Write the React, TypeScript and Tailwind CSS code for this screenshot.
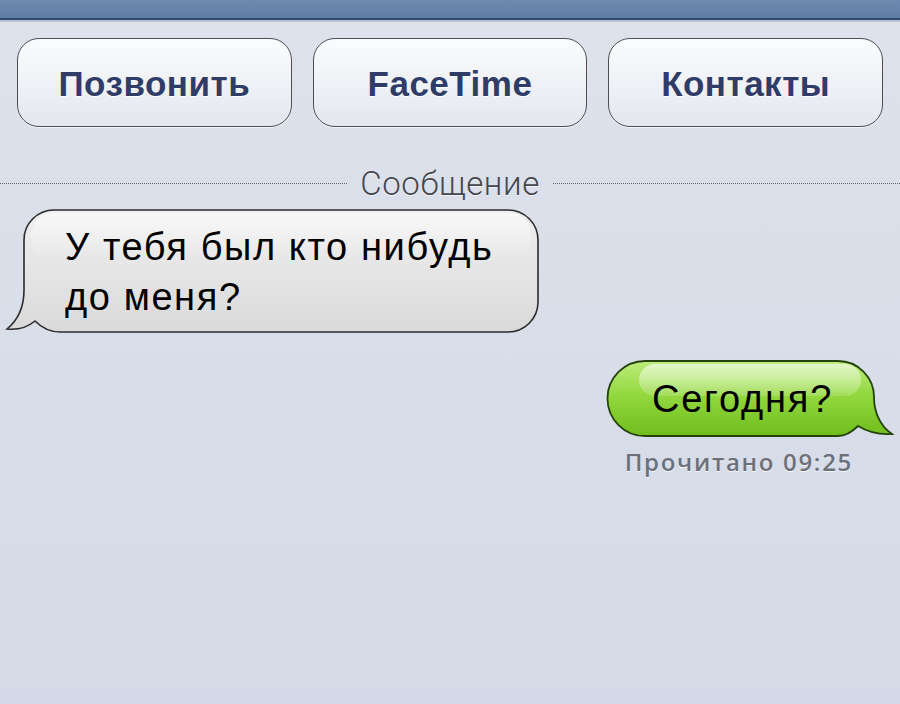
import React from 'react';

const buttons = ['Позвонить', 'FaceTime', 'Контакты'];

const GrayBubble: React.FC<{ lines: string[] }> = ({ lines }) => (
  <div className="relative w-[536px] h-[126px] ml-[5px]">
    <svg className="absolute inset-0" width="536" height="126" viewBox="0 0 536 126">
      <defs>
        <linearGradient id="grayFill" x1="0" y1="0" x2="0" y2="1">
          <stop offset="0" stopColor="#efefef" />
          <stop offset="0.5" stopColor="#e5e5e5" />
          <stop offset="1" stopColor="#d9d9d9" />
        </linearGradient>
        <linearGradient id="grayGloss" x1="0" y1="0" x2="0" y2="1">
          <stop offset="0" stopColor="#ffffff" stopOpacity="0.55" />
          <stop offset="1" stopColor="#ffffff" stopOpacity="0" />
        </linearGradient>
      </defs>
      <path
        d="M 49 2 H 503 A 30 30 0 0 1 533 32 V 94 A 30 30 0 0 1 503 124 H 55 C 43 124 35 118 30 113 C 23 119 13 122 2 121 C 13 112 19 100 19 82 V 32 A 30 30 0 0 1 49 2 Z"
        fill="url(#grayFill)"
        stroke="#2b2b2b"
        strokeWidth="1.6"
      />
      <rect x="26" y="5" width="500" height="46" rx="22" fill="url(#grayGloss)" />
    </svg>
    <div className="relative pl-[60px] pt-[14px] text-[38px] leading-[50px] tracking-[1.6px] text-black font-['Liberation_Sans',sans-serif]">
      {lines.map((l) => (
        <div key={l}>{l}</div>
      ))}
    </div>
  </div>
);

const GreenBubble: React.FC<{ text: string }> = ({ text }) => (
  <div className="relative w-[290px] h-[82px]">
    <svg className="absolute inset-0" width="290" height="82" viewBox="0 0 290 82">
      <defs>
        <linearGradient id="greenFill" x1="0" y1="0" x2="0" y2="1">
          <stop offset="0" stopColor="#bdec7c" />
          <stop offset="0.45" stopColor="#93d83f" />
          <stop offset="1" stopColor="#6fbd1c" />
        </linearGradient>
        <linearGradient id="greenGloss" x1="0" y1="0" x2="0" y2="1">
          <stop offset="0" stopColor="#ffffff" stopOpacity="0.6" />
          <stop offset="1" stopColor="#ffffff" stopOpacity="0.15" />
        </linearGradient>
      </defs>
      <path
        d="M 40 3 H 233 A 36 36 0 0 1 269 39 C 269 54 275 68 287 76 C 275 77 263 74 253 68 C 247 74 240 78 233 78 H 40 A 37.5 37.5 0 0 1 40 3 Z"
        fill="url(#greenFill)"
        stroke="#24420b"
        strokeWidth="1.8"
      />
      <rect x="34" y="6" width="222" height="32" rx="16" fill="url(#greenGloss)" />
    </svg>
    <div className="relative w-[269px] h-[82px] pl-[6px] flex items-center justify-center text-[38px] tracking-[1.8px] text-black font-['Liberation_Sans',sans-serif]">
      {text}
    </div>
  </div>
);

export default function App() {
  return (
    <div className="w-[900px] h-[704px] overflow-hidden flex flex-col bg-gradient-to-b from-[#dde2eb] to-[#d4dae7]">
      <div className="h-[18px] bg-gradient-to-b from-[#6f8bb0] to-[#5f7ca3]" />
      <div className="h-[2px] bg-[#2f4a74]" />
      <div className="h-[2px] bg-[#b9c3d4]" />

      <div className="grid grid-cols-3 gap-[21px] px-[17px] mt-[16px]">
        {buttons.map((b) => (
          <div
            key={b}
            className="h-[89px] rounded-[22px] border-[1.5px] border-[#4d4f55] bg-gradient-to-b from-[#fbfcfd] to-[#e3e7ee] shadow-[0_1px_0_#f3f5f9] flex items-center justify-center pt-[3px]"
          >
            <span className="text-[35px] tracking-[0.5px] font-bold text-[#2f3c68] font-['Liberation_Sans',sans-serif] [text-shadow:0_1px_0_#ffffff]">
              {b}
            </span>
          </div>
        ))}
      </div>

      <div className="flex items-center mt-[40px] h-[32px]">
        <div className="flex-1 border-t border-dotted border-[#5f646e]" />
        <span className="px-[13px] text-[33px] tracking-[0.6px] font-light text-[#45474d] font-['Roboto',sans-serif] leading-none [text-shadow:0_1px_0_#f2f4f8]">
          Сообщение
        </span>
        <div className="flex-1 border-t border-dotted border-[#5f646e]" />
      </div>

      <div className="mt-[9px]">
        <GrayBubble lines={['У тебя был кто нибудь', 'до меня?']} />
      </div>

      <div className="flex flex-col items-end pr-[5px] mt-[24px]">
        <GreenBubble text="Сегодня?" />
        <div className="mt-[6px] mr-[42px] text-[24px] font-semibold text-[#6c707a] font-['Open_Sans',sans-serif] tracking-[1.7px] leading-[32px] [text-shadow:0_1px_0_#f4f6fa]">
          Прочитано 09:25
        </div>
      </div>
    </div>
  );
}
